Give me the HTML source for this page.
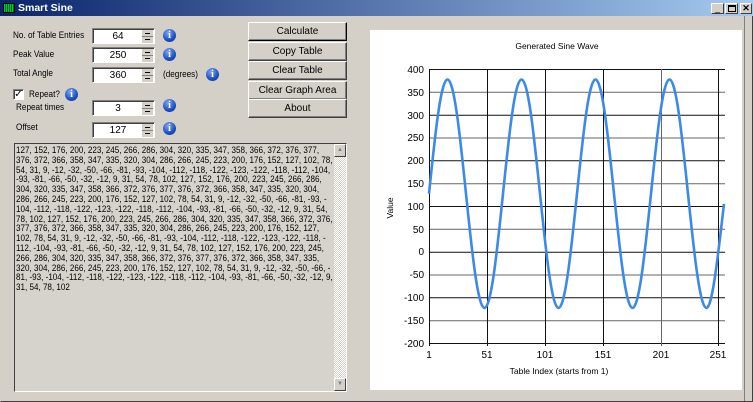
<!DOCTYPE html>
<html><head><style>
*{margin:0;padding:0;box-sizing:border-box}
body{width:753px;height:402px;overflow:hidden;background:#d4d0c8;font-family:"Liberation Sans",sans-serif;position:relative}
.t{position:absolute;font-size:9.5px;color:#000;white-space:nowrap;transform-origin:0 0;transform:scaleX(.86)}
.title{position:absolute;left:0;top:0;width:753px;height:16px;background:linear-gradient(90deg,#0a246a,#a6caf0);}
.inp{position:absolute;left:92px;width:63px;height:16px;background:#fff;border-top:1px solid #808080;border-left:1px solid #808080;border-right:1px solid #fff;border-bottom:1px solid #fff;box-shadow:inset 1px 1px 0 #404040}
.inp span{position:absolute;left:0;width:50px;text-align:center;font-size:10px;top:2px}
.sp{position:absolute;right:1px;top:1px;width:12px;height:13px;background:#d4d0c8;border-left:1px solid #fff}
.sp:before{content:"";position:absolute;left:0;right:0;top:6px;height:1px;background:#808080}
.sp:after{content:"";position:absolute;left:3px;top:3px;width:5px;height:1px;background:#000;box-shadow:0 6px 0 #000}
.ic{position:absolute;width:13px;height:13px;border-radius:50%;background:radial-gradient(circle at 40% 30%,#7fa8f0,#1a4fc0 60%,#0a2f8a);color:#fff;font:bold 10px "Liberation Serif",serif;text-align:center;line-height:13px}
.btn{position:absolute;left:248px;width:99px;height:19px;background:#d4d0c8;border:1px solid;border-color:#fff #404040 #404040 #fff;box-shadow:inset -1px -1px 0 #808080;font-size:10px;text-align:center;line-height:17px}
</style></head><body>
<div style="position:absolute;left:0;top:0;width:753px;height:402px;border:1px solid;border-color:#d4d0c8 #404040 #404040 #d4d0c8"></div>
<div class="title"></div>
<div style="position:absolute;left:3px;top:3px;width:12px;height:10px;background:repeating-linear-gradient(90deg,#0c3 0 1px,#062 1px 2px);border:1px solid #000"></div>
<div style="position:absolute;left:18px;top:2px;color:#fff;font-weight:bold;font-size:10.5px">Smart Sine</div>
<div style="position:absolute;left:711px;top:3px;width:13px;height:11px;background:#d4d0c8;border:1px solid;border-color:#fff #404040 #404040 #fff;font-size:9px;line-height:8px;text-align:center">_</div>
<div style="position:absolute;left:725px;top:3px;width:13px;height:11px;background:#d4d0c8;border:1px solid;border-color:#fff #404040 #404040 #fff"><div style="position:absolute;left:2px;top:1px;width:8px;height:7px;border:1px solid #000;border-top-width:2px"></div></div>
<div style="position:absolute;left:740px;top:3px;width:12px;height:11px;background:#d4d0c8;border:1px solid;border-color:#fff #404040 #404040 #fff;font:bold 9px sans-serif;line-height:9px;text-align:center">✕</div>

<div class="t" style="left:13px;top:30px">No. of Table Entries</div>
<div class="t" style="left:13px;top:49px">Peak Value</div>
<div class="t" style="left:13px;top:68px">Total Angle</div>
<div class="t" style="left:29px;top:89px">Repeat?</div>
<div class="t" style="left:16px;top:102px">Repeat times</div>
<div class="t" style="left:16px;top:122px">Offset</div>
<div class="t" style="left:163px;top:69px">(degrees)</div>
<div style="position:absolute;left:13px;top:89px;width:11px;height:11px;background:#fff;border:1px solid;border-color:#808080 #fff #fff #808080;box-shadow:inset 1px 1px 0 #404040;font-size:10px;line-height:9px;text-align:center">✓</div>

<div class="inp" style="top:28px"><span>64</span><div class="sp"></div></div>
<div class="inp" style="top:47px"><span>250</span><div class="sp"></div></div>
<div class="inp" style="top:67px"><span>360</span><div class="sp"></div></div>
<div class="inp" style="top:100px"><span>3</span><div class="sp"></div></div>
<div class="inp" style="top:122px"><span>127</span><div class="sp"></div></div>

<div class="ic" style="left:163px;top:29px">i</div>
<div class="ic" style="left:163px;top:48px">i</div>
<div class="ic" style="left:206px;top:68px">i</div>
<div class="ic" style="left:65px;top:88px">i</div>
<div class="ic" style="left:163px;top:99px">i</div>
<div class="ic" style="left:163px;top:122px">i</div>

<div class="btn" style="top:22px;border-color:#fff #000 #000 #fff">Calculate</div>
<div class="btn" style="top:42px">Copy Table</div>
<div class="btn" style="top:61px">Clear Table</div>
<div class="btn" style="top:81px">Clear Graph Area</div>
<div class="btn" style="top:99px">About</div>

<div style="position:absolute;left:14px;top:143px;width:333px;height:249px;background:#d6d2cc;border:1px solid;border-color:#404040 #fff #fff #404040"></div>
<div style="position:absolute;left:334px;top:144px;width:12px;height:247px;background:repeating-conic-gradient(#d4d0c8 0 25%,#fff 0 50%) 0 0/2px 2px"></div>
<div style="position:absolute;left:334px;top:144px;width:12px;height:13px;background:#d4d0c8;border:1px solid;border-color:#fff #404040 #404040 #fff;font-size:6px;text-align:center;line-height:11px;color:#808080">▲</div>
<div style="position:absolute;left:334px;top:378px;width:12px;height:13px;background:#d4d0c8;border:1px solid;border-color:#fff #404040 #404040 #fff;font-size:6px;text-align:center;line-height:11px;color:#808080">▼</div>
<div style="position:absolute;left:16px;top:146px;font-size:9.5px;line-height:9.8px;white-space:pre;transform-origin:0 0;transform:scaleX(.85);color:#000">127, 152, 176, 200, 223, 245, 266, 286, 304, 320, 335, 347, 358, 366, 372, 376, 377,
376, 372, 366, 358, 347, 335, 320, 304, 286, 266, 245, 223, 200, 176, 152, 127, 102, 78,
54, 31, 9, -12, -32, -50, -66, -81, -93, -104, -112, -118, -122, -123, -122, -118, -112, -104,
-93, -81, -66, -50, -32, -12, 9, 31, 54, 78, 102, 127, 152, 176, 200, 223, 245, 266, 286,
304, 320, 335, 347, 358, 366, 372, 376, 377, 376, 372, 366, 358, 347, 335, 320, 304,
286, 266, 245, 223, 200, 176, 152, 127, 102, 78, 54, 31, 9, -12, -32, -50, -66, -81, -93, -
104, -112, -118, -122, -123, -122, -118, -112, -104, -93, -81, -66, -50, -32, -12, 9, 31, 54,
78, 102, 127, 152, 176, 200, 223, 245, 266, 286, 304, 320, 335, 347, 358, 366, 372, 376,
377, 376, 372, 366, 358, 347, 335, 320, 304, 286, 266, 245, 223, 200, 176, 152, 127,
102, 78, 54, 31, 9, -12, -32, -50, -66, -81, -93, -104, -112, -118, -122, -123, -122, -118, -
112, -104, -93, -81, -66, -50, -32, -12, 9, 31, 54, 78, 102, 127, 152, 176, 200, 223, 245,
266, 286, 304, 320, 335, 347, 358, 366, 372, 376, 377, 376, 372, 366, 358, 347, 335,
320, 304, 286, 266, 245, 223, 200, 176, 152, 127, 102, 78, 54, 31, 9, -12, -32, -50, -66, -
81, -93, -104, -112, -118, -122, -123, -122, -118, -112, -104, -93, -81, -66, -50, -32, -12, 9,
31, 54, 78, 102</div>

<div style="position:absolute;left:744px;top:16px;width:1px;height:385px;background:#808080"></div>
<svg style="position:absolute;left:0;top:0" width="753" height="402">
<rect x="370" y="30" width="372" height="360" fill="#fff"/>
<g stroke="#111" stroke-width="1">
<line x1="429" y1="69.5" x2="725" y2="69.5"/><line x1="429" y1="92.3" x2="725" y2="92.3" stroke="#666"/>
<line x1="429" y1="115.2" x2="725" y2="115.2"/><line x1="429" y1="138" x2="725" y2="138" stroke="#666"/>
<line x1="429" y1="160.8" x2="725" y2="160.8"/><line x1="429" y1="183.7" x2="725" y2="183.7" stroke="#666"/>
<line x1="429" y1="206.5" x2="725" y2="206.5"/><line x1="429" y1="229.3" x2="725" y2="229.3" stroke="#666"/>
<line x1="429" y1="252.2" x2="725" y2="252.2"/><line x1="429" y1="275" x2="725" y2="275" stroke="#666"/>
<line x1="429" y1="297.8" x2="725" y2="297.8"/><line x1="429" y1="320.7" x2="725" y2="320.7" stroke="#666"/>
<line x1="429" y1="343.5" x2="725" y2="343.5"/>
<line x1="429.5" y1="69" x2="429.5" y2="346"/><line x1="487.5" y1="69" x2="487.5" y2="346"/>
<line x1="545.5" y1="69" x2="545.5" y2="346"/><line x1="603.5" y1="69" x2="603.5" y2="346"/>
<line x1="661.5" y1="69" x2="661.5" y2="346" stroke="#666"/><line x1="718.5" y1="69" x2="718.5" y2="346"/>
</g>
<path fill="none" stroke="#3c8ae8" stroke-width="2.6" d="M429,193.7
c6.03,-58.5 11.8,-114.2 18.5,-114.2 c6.7,0 12.47,55.7 18.5,114.2 c6.03,58.5 11.8,114.2 18.5,114.2 c6.7,0 12.47,-55.7 18.5,-114.2
c6.03,-58.5 11.8,-114.2 18.5,-114.2 c6.7,0 12.47,55.7 18.5,114.2 c6.03,58.5 11.8,114.2 18.5,114.2 c6.7,0 12.47,-55.7 18.5,-114.2
c6.03,-58.5 11.8,-114.2 18.5,-114.2 c6.7,0 12.47,55.7 18.5,114.2 c6.03,58.5 11.8,114.2 18.5,114.2 c6.7,0 12.47,-55.7 18.5,-114.2
c6.03,-58.5 11.8,-114.2 18.5,-114.2 c6.7,0 12.47,55.7 18.5,114.2 c6.03,58.5 11.8,114.2 18.5,114.2 c6.03,0 11.8,-55.7 17.5,-104"/>
<g font-family="Liberation Sans,sans-serif" font-size="10" fill="#000">
<text x="557" y="49" text-anchor="middle" font-size="8.5">Generated Sine Wave</text>
<g text-anchor="end">
<text x="424" y="73">400</text><text x="424" y="96">350</text><text x="424" y="119">300</text><text x="424" y="141">250</text>
<text x="424" y="164">200</text><text x="424" y="187">150</text><text x="424" y="210">100</text><text x="424" y="233">50</text>
<text x="424" y="255">0</text><text x="424" y="278">-50</text><text x="424" y="301">-100</text><text x="424" y="324">-150</text><text x="424" y="347">-200</text>
</g>
<g text-anchor="middle">
<text x="429" y="358">1</text><text x="487" y="358">51</text><text x="545" y="358">101</text><text x="603" y="358">151</text><text x="661" y="358">201</text><text x="718" y="358">251</text>
</g>
<text x="559" y="374" text-anchor="middle" font-size="8.5">Table Index (starts from 1)</text>
<text transform="translate(393,208) rotate(-90)" text-anchor="middle" font-size="8.5">Value</text>
</g>
</svg>
</body></html>
